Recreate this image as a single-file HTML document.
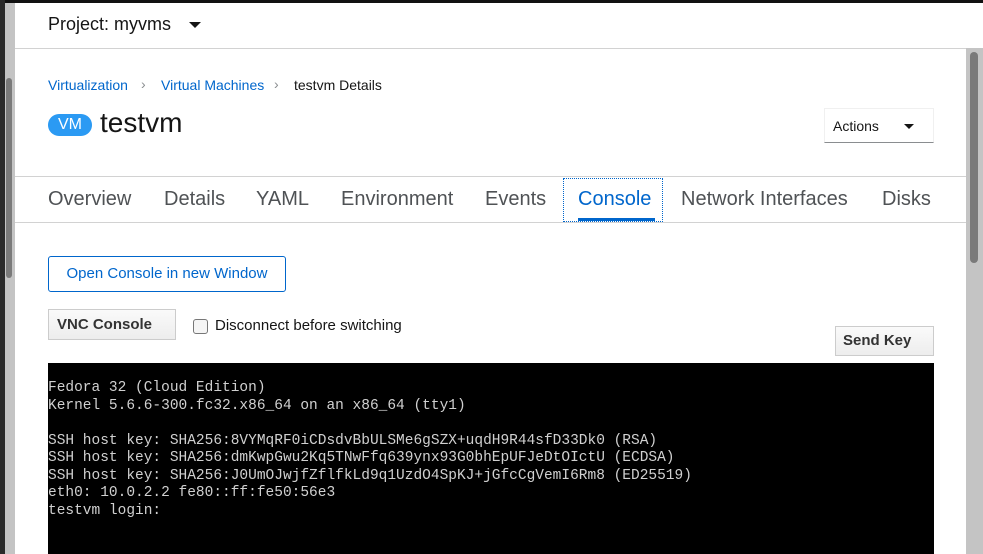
<!DOCTYPE html>
<html><head><style>
*{box-sizing:border-box;margin:0;padding:0}
body{width:983px;height:554px;overflow:hidden;background:#fff;font-family:"Liberation Sans",sans-serif;position:relative;color:#151515}
.a{position:absolute}
</style></head><body>
<div class="a" style="left:0;top:0;width:983px;height:3px;background:#111"></div>
<div class="a" style="left:0;top:0;width:5px;height:554px;background:#2a2a2a"></div>
<div class="a" style="left:5px;top:3px;width:10px;height:551px;background:#c4c4c4"></div>
<div class="a" style="left:6px;top:78px;width:6px;height:200px;background:#7a7a7a;border-radius:3px"></div>
<div class="a" style="left:15px;top:48px;width:951px;height:1px;background:#d2d2d2"></div>
<div class="a" style="left:48px;top:14px;font-size:18px">Project: myvms</div>
<div class="a" style="left:189px;top:22px;width:0;height:0;border-left:6px solid transparent;border-right:6px solid transparent;border-top:6px solid #151515"></div>
<div class="a" style="left:966px;top:48px;width:17px;height:506px;background:#c4c4c4"></div>
<div class="a" style="left:970px;top:52px;width:8px;height:211px;background:#7a7a7a;border-radius:4px"></div>
<div class="a" style="left:48px;top:77px;font-size:14px;color:#0066cc">Virtualization</div>
<div class="a" style="left:141px;top:76px;font-size:14px;color:#8a8d90">›</div>
<div class="a" style="left:161px;top:77px;font-size:14px;color:#0066cc">Virtual Machines</div>
<div class="a" style="left:274px;top:76px;font-size:14px;color:#8a8d90">›</div>
<div class="a" style="left:294px;top:77px;font-size:14px">testvm Details</div>
<div class="a" style="left:48px;top:114px;width:44px;height:22px;background:#2b9af3;border-radius:11px;color:#fff;font-size:16px;text-align:center;line-height:22px">VM</div>
<div class="a" style="left:100px;top:107px;font-size:28px">testvm</div>
<div class="a" style="left:824px;top:108px;width:110px;height:35px;border:1px solid #f0f0f0;border-bottom:1px solid #8a8d90;font-size:14px;padding:9px 0 0 8px">Actions</div>
<div class="a" style="left:904px;top:124px;width:0;height:0;border-left:5px solid transparent;border-right:5px solid transparent;border-top:5px solid #151515"></div>
<div class="a" style="left:15px;top:176px;width:951px;height:1px;background:#d2d2d2"></div>
<div class="a" style="left:15px;top:222px;width:951px;height:1px;background:#d2d2d2"></div>
<div class="a" style="top:188px;left:48px;font-size:20px;color:#4f5255;white-space:nowrap">
<span class="a" style="left:0">Overview</span><span class="a" style="left:116px">Details</span><span class="a" style="left:208px">YAML</span><span class="a" style="left:293px">Environment</span><span class="a" style="left:437px">Events</span><span class="a" style="left:530px;color:#0066cc">Console</span><span class="a" style="left:633px">Network Interfaces</span><span class="a" style="left:834px">Disks</span></div>
<div class="a" style="left:563px;top:178px;width:100px;height:44px;border:1px dotted #0066cc"></div>
<div class="a" style="left:578px;top:218px;width:77px;height:3px;background:#0066cc"></div>
<div class="a" style="left:48px;top:256px;width:238px;height:36px;border:1px solid #0066cc;border-radius:3px;color:#0066cc;font-size:15px;text-align:center;line-height:34px">Open Console in new Window</div>
<div class="a" style="left:48px;top:309px;width:128px;height:31px;border:1px solid #ccc;background:linear-gradient(#fafafa,#ededed);font-size:15px;font-weight:bold;color:#333;padding:6px 0 0 8px">VNC Console</div>
<div class="a" style="left:193px;top:319px;width:15px;height:15px;border:1px solid #777;border-radius:3px;background:#f5f5f5"></div>
<div class="a" style="left:215px;top:317px;font-size:15px">Disconnect before switching</div>
<div class="a" style="left:835px;top:326px;width:99px;height:30px;border:1px solid #ccc;background:linear-gradient(#fafafa,#ededed);font-size:15px;font-weight:bold;color:#333;padding:5px 0 0 7px">Send Key</div>
<div class="a" style="left:48px;top:363px;width:886px;height:191px;background:#000"></div>
<pre class="a" style="left:48px;top:380px;font-family:'Liberation Mono',monospace;font-size:14.5px;line-height:17.5px;color:#d0d0d0">Fedora 32 (Cloud Edition)
Kernel 5.6.6-300.fc32.x86_64 on an x86_64 (tty1)

SSH host key: SHA256:8VYMqRF0iCDsdvBbULSMe6gSZX+uqdH9R44sfD33Dk0 (RSA)
SSH host key: SHA256:dmKwpGwu2Kq5TNwFfq639ynx93G0bhEpUFJeDtOIctU (ECDSA)
SSH host key: SHA256:J0UmOJwjfZflfkLd9q1UzdO4SpKJ+jGfcCgVemI6Rm8 (ED25519)
eth0: 10.0.2.2 fe80::ff:fe50:56e3
testvm login:</pre>
</body></html>
